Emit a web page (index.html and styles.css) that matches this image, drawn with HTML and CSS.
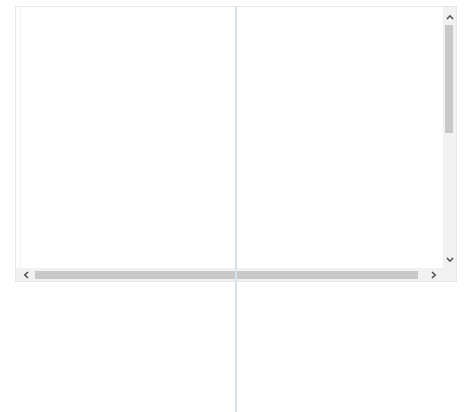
FILE: index.html
```html
<!DOCTYPE html>
<html>
<head>
<meta charset="utf-8">
<link rel="stylesheet" href="styles.css">
</head>
<body>
<div class="page">
  <div class="scroller">
    <div class="viewport">
      <div class="canvas"></div>
    </div>
    <div class="vbar">
      <div class="vbtn vbtn-up">
        <svg width="8" height="6" viewBox="0 0 8 6"><polyline points="1,5 4,1.8 7,5" fill="none" stroke="#505050" stroke-width="1.6"/></svg>
      </div>
      <div class="vtrack"><div class="vthumb"></div></div>
      <div class="vbtn">
        <svg width="8" height="6" viewBox="0 0 8 6"><polyline points="1,1 4,4.2 7,1" fill="none" stroke="#505050" stroke-width="1.6"/></svg>
      </div>
    </div>
    <div class="hbar">
      <div class="hbtn">
        <svg width="6" height="8" viewBox="0 0 6 8"><polyline points="5,1 1.8,4 5,7" fill="none" stroke="#505050" stroke-width="1.6"/></svg>
      </div>
      <div class="htrack"><div class="hthumb"></div></div>
      <div class="hbtn">
        <svg width="6" height="8" viewBox="0 0 6 8"><polyline points="1,1 4.2,4 1,7" fill="none" stroke="#505050" stroke-width="1.6"/></svg>
      </div>
    </div>
    <div class="corner"></div>
  </div>
  <div class="guide"></div>
</div>
</body>
</html>
```

FILE: styles.css
```css
html, body {
  margin: 0;
  padding: 0;
  background: #ffffff;
  font-family: "Liberation Sans", Arial, sans-serif;
}
.page {
  position: relative;
  width: 474px;
  height: 412px;
  padding: 6px 0 0 15px;
  box-sizing: border-box;
}
.scroller {
  width: 442px;
  height: 276px;
  box-sizing: border-box;
  border: 1px solid #e8e8e8;
  background: #ffffff;
  display: grid;
  grid-template-columns: 1fr 13px;
  grid-template-rows: 1fr 13px;
}
.viewport {
  overflow: hidden;
}
.canvas {
  width: 432px;
  height: 550px;
  margin-left: 4px;
  border-left: 1px solid #f3f3f3;
}
.vbar {
  background: #f1f1f1;
  display: flex;
  flex-direction: column;
}
.vbtn {
  height: 17px;
  display: flex;
  align-items: center;
  justify-content: center;
  flex: none;
}
.vbtn-up {
  padding-top: 3px;
  box-sizing: border-box;
}
.vtrack {
  flex: 1;
  padding: 1px 3px 0 2px;
}
.vthumb {
  height: 108px;
  background: #c8c8c8;
}
.hbar {
  background: #f1f1f1;
  display: flex;
}
.hbtn {
  width: 19px;
  display: flex;
  align-items: center;
  justify-content: center;
  flex: none;
}
.htrack {
  flex: 1;
  padding: 3px 0 2px 0;
}
.hthumb {
  width: 383px;
  height: 100%;
  background: #c8c8c8;
}
.corner {
  background: #f1f1f1;
}
.guide {
  position: absolute;
  left: 235px;
  top: 6px;
  width: 2px;
  height: 406px;
  background: #d3e3ee;
}
```
